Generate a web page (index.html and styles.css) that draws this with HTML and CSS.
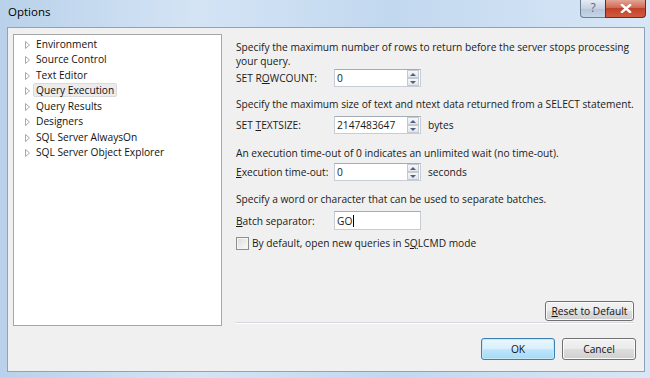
FILE: index.html
```html
<!DOCTYPE html>
<html>
<head>
<meta charset="utf-8">
<link rel="stylesheet" href="styles.css">
</head>
<body>
<div class="window">
  <div class="titlebar">
    <span class="title">Options</span>
    <div class="caption-btns">
      <div class="cap help">?</div>
      <div class="cap close"><svg width="12" height="9" viewBox="0 0 12 9"><path d="M2 1 L10 8 M10 1 L2 8" stroke="#fff" stroke-width="2.4" stroke-linecap="square"/></svg></div>
    </div>
  </div>
  <div class="client">
    <div class="main">
      <div class="tree">
        <div class="node"><svg class="tri" width="5" height="8" viewBox="0 0 5 8"><path d="M0.5 0.5 L4.5 4 L0.5 7.5 Z" fill="#fff" stroke="#a8a8a8"/></svg><span class="lbl">Environment</span></div>
        <div class="node"><svg class="tri" width="5" height="8" viewBox="0 0 5 8"><path d="M0.5 0.5 L4.5 4 L0.5 7.5 Z" fill="#fff" stroke="#a8a8a8"/></svg><span class="lbl">Source Control</span></div>
        <div class="node"><svg class="tri" width="5" height="8" viewBox="0 0 5 8"><path d="M0.5 0.5 L4.5 4 L0.5 7.5 Z" fill="#fff" stroke="#a8a8a8"/></svg><span class="lbl">Text Editor</span></div>
        <div class="node"><svg class="tri" width="5" height="8" viewBox="0 0 5 8"><path d="M0.5 0.5 L4.5 4 L0.5 7.5 Z" fill="#fff" stroke="#a8a8a8"/></svg><span class="lbl sel">Query Execution</span></div>
        <div class="node"><svg class="tri" width="5" height="8" viewBox="0 0 5 8"><path d="M0.5 0.5 L4.5 4 L0.5 7.5 Z" fill="#fff" stroke="#a8a8a8"/></svg><span class="lbl">Query Results</span></div>
        <div class="node"><svg class="tri" width="5" height="8" viewBox="0 0 5 8"><path d="M0.5 0.5 L4.5 4 L0.5 7.5 Z" fill="#fff" stroke="#a8a8a8"/></svg><span class="lbl">Designers</span></div>
        <div class="node"><svg class="tri" width="5" height="8" viewBox="0 0 5 8"><path d="M0.5 0.5 L4.5 4 L0.5 7.5 Z" fill="#fff" stroke="#a8a8a8"/></svg><span class="lbl">SQL Server AlwaysOn</span></div>
        <div class="node"><svg class="tri" width="5" height="8" viewBox="0 0 5 8"><path d="M0.5 0.5 L4.5 4 L0.5 7.5 Z" fill="#fff" stroke="#a8a8a8"/></svg><span class="lbl">SQL Server Object Explorer</span></div>
      </div>
      <div class="page">
        <p class="desc p1">Specify the maximum number of rows to return before the server stops processing<br>your query.</p>
        <div class="row r1">
          <span class="label">SET R<u>O</u>WCOUNT:</span>
          <div class="num"><span class="val">0</span><span class="spin"><span class="sb up"></span><span class="sb down"></span></span></div>
        </div>
        <p class="desc p2">Specify the maximum size of text and ntext data returned from a SELECT statement.</p>
        <div class="row r2">
          <span class="label">SET <u>T</u>EXTSIZE:</span>
          <div class="num"><span class="val">2147483647</span><span class="spin"><span class="sb up"></span><span class="sb down"></span></span></div>
          <span class="unit">bytes</span>
        </div>
        <p class="desc p3">An execution time-out of 0 indicates an unlimited wait (no time-out).</p>
        <div class="row r3">
          <span class="label"><u>E</u>xecution time-out:</span>
          <div class="num"><span class="val">0</span><span class="spin"><span class="sb up"></span><span class="sb down"></span></span></div>
          <span class="unit">seconds</span>
        </div>
        <p class="desc p4">Specify a word or character that can be used to separate batches.</p>
        <div class="row r4">
          <span class="label"><u>B</u>atch separator:</span>
          <div class="num text"><span class="val">GO</span><span class="caret"></span></div>
        </div>
        <div class="check">
          <span class="box"></span>
          <span>By default, open new queries in S<u>Q</u>LCMD mode</span>
        </div>
        <div class="spacer"></div>
        <div class="reset-row"><div class="btn reset"><u>R</u>eset to Default</div></div>
        <div class="sep"></div>
      </div>
    </div>
    <div class="buttons">
      <div class="btn ok">OK</div>
      <div class="btn cancel">Cancel</div>
    </div>
  </div>
</div>
</body>
</html>
```
FILE: styles.css
```css
* { box-sizing: border-box; }
html, body { margin: 0; padding: 0; }
body {
  width: 650px; height: 378px; overflow: hidden;
  font-family: "Open Sans", "Noto Sans", sans-serif;
  font-size: 10.2px; color: #1a1a1a;
}
.window {
  width: 650px; height: 378px;
  background: linear-gradient(90deg, #b9d1ea 0%, #d4e4f5 30%, #c2d8ef 60%, #d8e7f6 100%);
  display: flex; flex-direction: column;
}
.titlebar {
  height: 27px; display: flex; align-items: flex-start;
}
.title { font-size: 11.5px; color: #000; margin: 4px 0 0 8px; }
.caption-btns {
  margin-left: auto; margin-right: 4px; display: flex;
}
.cap { height: 18px; border: 1px solid #6d7d94; border-top: none; }
.help {
  width: 25px; border-radius: 0 0 0 4px; border-right: none;
  background: linear-gradient(#e4ebf4, #c7d3e2 50%, #b5c5d9 51%, #c6d5e6);
  color: #5a6a80; font-size: 12px; text-align: center; line-height: 16px;
}
.close {
  width: 41px; border-radius: 0 0 4px 0; border-color: #6c2a20;
  background: linear-gradient(#e3a596, #d06a55 45%, #c2412a 50%, #cf5b3e 100%);
  display: flex; align-items: center; justify-content: center;
}
.client {
  flex: 1; margin: 0 5px 6px 7px;
  background: #f0f0f0; border: 1px solid #8ea2b9;
  display: flex; flex-direction: column;
}
.main { display: flex; padding: 6px 0 0 5px; }
.tree {
  width: 209px; height: 292px; background: #fff;
  border: 1px solid #a7a7a7; padding-top: 1px;
}
.node { height: 15.5px; display: flex; align-items: center; white-space: nowrap; }
.tri { margin-left: 11px; margin-right: 3px; position: relative; top: 1px; flex-shrink: 0; }
.lbl { padding: 0 2px; border: 1px solid transparent; line-height: 12px; color: #111; }
.lbl.sel { background: #ececec; border-color: #dadada; border-radius: 2px; }
.page {
  width: 405px; margin-left: 14px; display: flex; flex-direction: column; height: 290px;
  white-space: nowrap;
}
.desc { margin: 0; line-height: 14px; }
.p1 { margin-top: 6px; }
.p2 { margin-top: 10px; }
.p3 { margin-top: 12px; }
.p4 { margin-top: 11px; }
.row { display: flex; align-items: center; height: 18px; }
.r1 { margin-top: 1px; }
.r2 { margin-top: 5px; }
.r3 { margin-top: 3px; }
.r4 { margin-top: 5px; height: 19px; }
.label { width: 98px; flex-shrink: 0; }
.num {
  width: 87px; height: 18px; background: #fff; flex-shrink: 0;
  border: 1px solid #c6cdd6; border-top-color: #a4acb6;
  display: flex; align-items: center; padding-left: 2px;
}
.num.text { height: 19px; }
.val { flex: 1; }
.text .val { flex: none; }
.caret { width: 1px; height: 12px; background: #000; margin-left: 1px; }
.spin { width: 12px; height: 16px; display: flex; flex-direction: column; margin-right: 1px; }
.sb {
  flex: 1; border: 1px solid #c3cad3; background: linear-gradient(#f7f7f7, #e6e6e6);
  display: flex; align-items: center; justify-content: center;
}
.sb.up::after { content: ""; border-bottom: 3px solid #4d6185; border-left: 3px solid transparent; border-right: 3px solid transparent; }
.sb.down::after { content: ""; border-top: 3px solid #4d6185; border-left: 3px solid transparent; border-right: 3px solid transparent; }
.unit { margin-left: 7px; }
.check { display: flex; align-items: center; margin-top: 6px; height: 14px; }
.box {
  width: 13px; height: 13px; border: 1px solid #8f8f8f; margin-right: 3px;
  background: linear-gradient(135deg, #dcdcdc, #fbfbfb);
  box-shadow: inset 0 0 0 1px #f4f4f4;
}
.spacer { flex: 1; }
.reset-row { display: flex; justify-content: flex-end; padding-right: 7px; }
.btn {
  border: 1px solid #707070; border-radius: 3px;
  background: linear-gradient(#f2f2f2 0%, #ebebeb 48%, #dddddd 52%, #cfcfcf 100%);
  box-shadow: inset 0 0 0 1px #fbfbfb;
  display: flex; align-items: center; justify-content: center; color: #111;
}
.reset { width: 89px; height: 20px; }
.sep { height: 2px; margin: 1px 7px 0 -1px; border-top: 1px solid #d5d9de; border-bottom: 1px solid #fff; }
.buttons { display: flex; justify-content: flex-end; gap: 7px; padding: 12px 8px 0 0; }
.ok, .cancel { width: 74px; height: 22px; }
.ok {
  border-color: #3c7fb1;
  background: linear-gradient(#eaf6fd 0%, #d9f0fc 48%, #bee6fd 52%, #a7d9f5 100%);
  box-shadow: inset 0 0 0 1px #c5e7fa;
}
```
